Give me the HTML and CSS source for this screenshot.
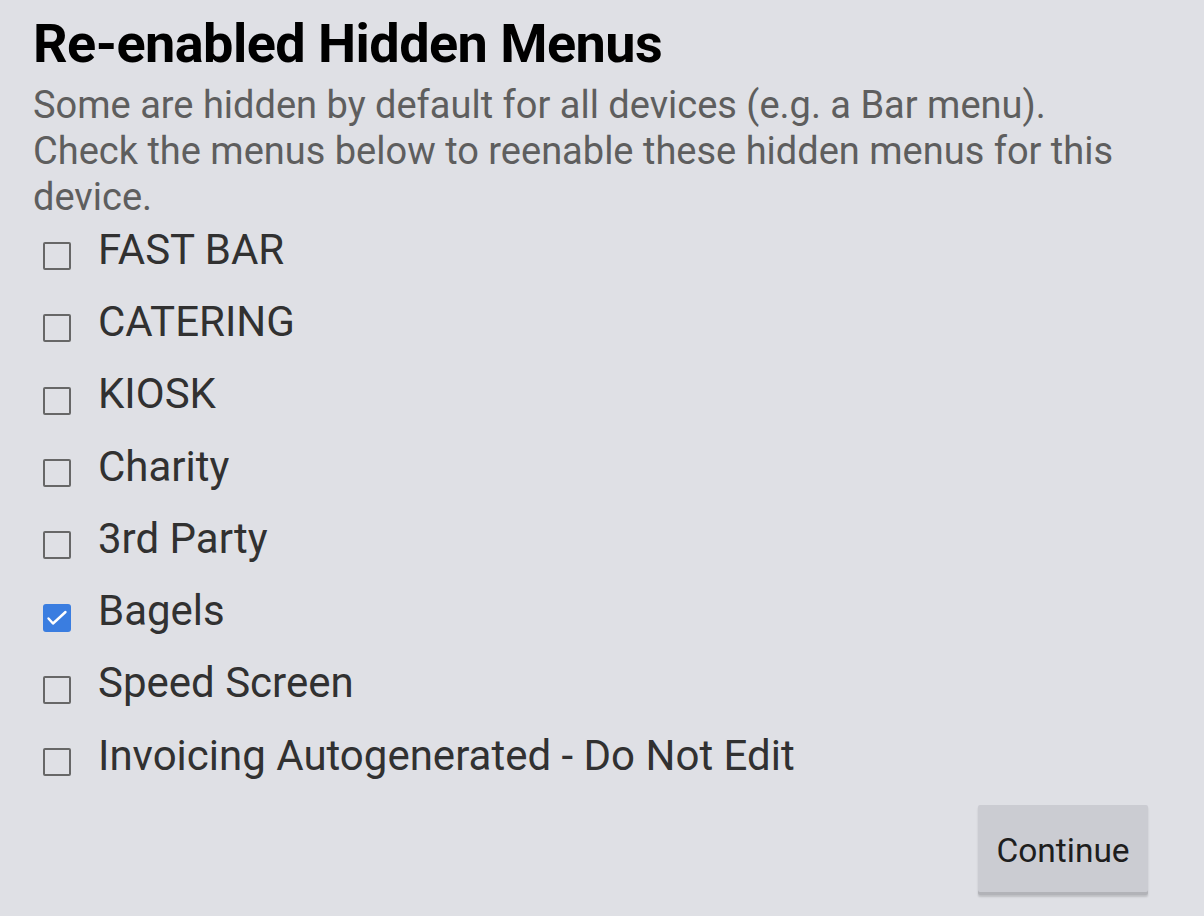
FILE: index.html
```html
<!DOCTYPE html>
<html lang="en">
<head>
<meta charset="utf-8">
<title>Re-enabled Hidden Menus</title>
<link rel="stylesheet" href="styles.css">
</head>
<body>
<main class="panel">
  <h1 class="title">Re-enabled Hidden Menus</h1>
  <p class="intro">Some are hidden by default for all devices (e.g. a Bar menu). Check the menus below to reenable these hidden menus for this device.</p>
  <ul class="menu-list">
    <li class="menu-item"><span class="box"></span><span class="label">FAST BAR</span></li>
    <li class="menu-item"><span class="box"></span><span class="label">CATERING</span></li>
    <li class="menu-item"><span class="box"></span><span class="label">KIOSK</span></li>
    <li class="menu-item"><span class="box"></span><span class="label">Charity</span></li>
    <li class="menu-item"><span class="box"></span><span class="label">3rd Party</span></li>
    <li class="menu-item"><span class="box checked"><svg viewBox="0 0 28 28" width="28" height="28"><path d="M5.5 14.5L10 19.5L22.5 8" fill="none" stroke="#fff" stroke-width="2.4" stroke-linecap="round" stroke-linejoin="round"/></svg></span><span class="label">Bagels</span></li>
    <li class="menu-item"><span class="box"></span><span class="label">Speed Screen</span></li>
    <li class="menu-item"><span class="box"></span><span class="label">Invoicing Autogenerated - Do Not Edit</span></li>
  </ul>
  <div class="actions">
    <button class="continue" type="button">Continue</button>
  </div>
</main>
</body>
</html>
```
FILE: styles.css
```css
html, body {
  margin: 0;
  padding: 0;
  background: #dfe0e5;
}

body {
  font-family: Roboto, "Noto Sans", sans-serif;
  width: 1204px;
  height: 916px;
  overflow: hidden;
}

.panel {
  padding: 14px 0 0 33px;
  display: flex;
  flex-direction: column;
}

.title {
  margin: 0;
  font-size: 54px;
  font-weight: 700;
  line-height: 60px;
  color: #000;
  letter-spacing: -0.55px;
}

.intro {
  margin: 8px 0 0;
  width: 1100px;
  font-size: 38px;
  line-height: 46px;
  color: #5e5e5e;
}

.menu-list {
  list-style: none;
  margin: -7px 0 0;
  padding: 0;
  display: flex;
  flex-direction: column;
}

.menu-item {
  display: flex;
  align-items: center;
  height: 72.3px;
}

.box {
  box-sizing: border-box;
  width: 28px;
  height: 28px;
  border: 2.5px solid #676767;
  border-radius: 2px;
  margin: 14px 0 0 10px;
  flex: none;
}

.box.checked {
  background: #3a7de0;
  border: none;
  border-radius: 3px;
}

.box svg {
  display: block;
  width: 28px;
  height: 28px;
}

.label {
  margin-left: 27px;
  font-size: 42px;
  color: #313131;
}

.actions {
  display: flex;
  justify-content: flex-end;
  padding-right: 56px;
  margin-top: 14px;
}

.continue {
  width: 170px;
  height: 90px;
  border: none;
  border-radius: 2px;
  background: #cbccd2;
  box-shadow: inset 0 -3px 0 #b2b3b8, 0 2px 2px rgba(0, 0, 0, 0.15);
  font-family: Roboto, "Noto Sans", sans-serif;
  font-size: 33.5px;
  color: #1e1e1e;
  padding: 0;
}
```
